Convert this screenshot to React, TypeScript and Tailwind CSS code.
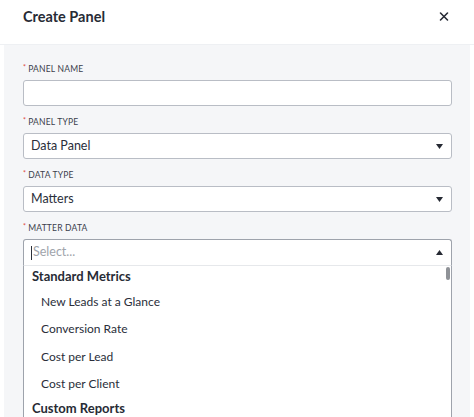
import { ReactNode } from "react";

const FONT = { fontFamily: "Lato, 'Open Sans', Arial, sans-serif" };

function Caret({ up = false }: { up?: boolean }) {
  return (
    <svg width="7" height="5" viewBox="0 0 7 5" className="shrink-0">
      {up ? (
        <path d="M0 5 L3.5 0 L7 5 Z" fill="#262a33" />
      ) : (
        <path d="M0 0 L7 0 L3.5 5 Z" fill="#262a33" />
      )}
    </svg>
  );
}

function Label({ text }: { text: string }) {
  return (
    <div className="h-[10px] mb-[6px] flex items-center text-[8.5px] leading-none tracking-[0.2px] text-[#3b404c] uppercase">
      <span className="text-[#e0443c] text-[7px] -mt-[3px] mr-[2px]">*</span>
      {text}
    </div>
  );
}

function Field({ label, children }: { label: string; children: ReactNode }) {
  return (
    <div className="mb-[11px]">
      <Label text={label} />
      {children}
    </div>
  );
}

function SelectBox({ value }: { value: string }) {
  return (
    <div className="h-[26px] bg-white border border-[#b9bdc5] rounded-[3px] flex items-center justify-between pl-[7px] pr-[8px] text-[12.5px] text-[#2a2e3a]">
      <span>{value}</span>
      <Caret />
    </div>
  );
}

const metrics = ["New Leads at a Glance", "Conversion Rate", "Cost per Lead", "Cost per Client"];

export default function App() {
  return (
    <div className="w-[474px] h-[417px] overflow-hidden bg-white flex flex-col" style={FONT}>
      {/* header */}
      <div className="h-[45px] shrink-0 flex items-start justify-between pl-[23px] pr-[22px] pt-[8px] border-b border-[#eef0f3]">
        <h1 className="text-[14.5px] leading-[18px] font-bold text-[#272b35]">Create Panel</h1>
        <svg width="16" height="18" viewBox="0 0 16 18">
          <path d="M4.5 5 L11.5 12 M11.5 5 L4.5 12" stroke="#272b35" strokeWidth="1.6" strokeLinecap="round" />
        </svg>
      </div>

      {/* form body */}
      <div className="flex-1 mx-[4px] bg-[#f5f6f8] pt-[19px] pl-[19px] pr-[18px]">
        <Field label="Panel Name">
          <div className="h-[26px] bg-white border border-[#b9bdc5] rounded-[3px]" />
        </Field>
        <Field label="Panel Type">
          <SelectBox value="Data Panel" />
        </Field>
        <Field label="Data Type">
          <SelectBox value="Matters" />
        </Field>
        <div>
          <Label text="Matter Data" />
          <div className="h-[27px] bg-white border border-[#9ea3ac] border-b-[#e6e8eb] rounded-t-[3px] flex items-center justify-between pl-[7px] pr-[8px] text-[12.5px]">
            <span className="flex items-center text-[#a0a4ab]">
              <span className="w-px h-[14px] bg-[#2c303a] mr-[1px]" />
              Select...
            </span>
            <Caret up />
          </div>
          <div className="relative bg-white border-x border-[#9ea3ac] h-[160px]">
            <div className="absolute right-[1px] top-[1px] w-[4px] h-[13px] rounded-full bg-[#8f9297]" />
            <div className="h-[22px] flex items-center pl-[8px] text-[13px] font-bold text-[#272b35]">
              Standard Metrics
            </div>
            {metrics.map((m) => (
              <div key={m} className="h-[27.5px] flex items-center pl-[17px] text-[12px] text-[#2a2e3a]">
                {m}
              </div>
            ))}
            <div className="h-[22px] flex items-center pl-[8px] text-[13px] font-bold text-[#272b35]">
              Custom Reports
            </div>
          </div>
        </div>
      </div>
    </div>
  );
}
